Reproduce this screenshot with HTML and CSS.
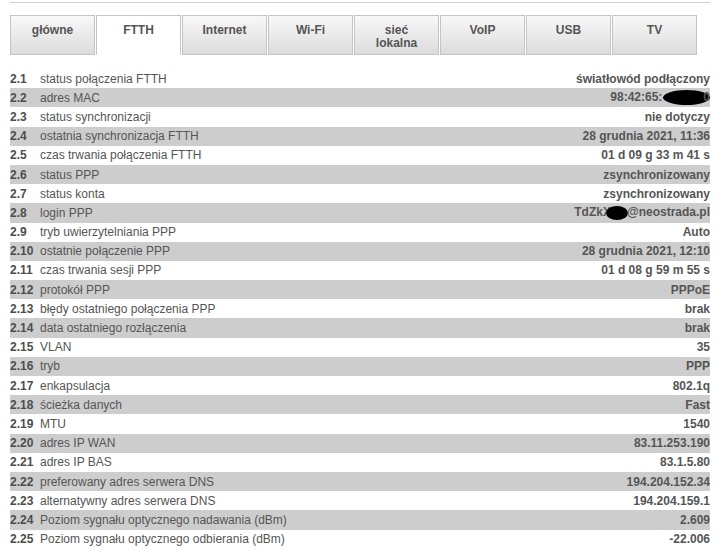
FILE: index.html
```html
<!DOCTYPE html>
<html lang="pl">
<head>
<meta charset="utf-8">
<title>FTTH</title>
<link rel="stylesheet" href="styles.css">
</head>
<body>
<div class="page">
  <div class="topline"></div>
  <nav class="tabs">
    <div class="tab">główne</div>
    <div class="tab active">FTTH</div>
    <div class="tab">Internet</div>
    <div class="tab">Wi-Fi</div>
    <div class="tab">sieć<br>lokalna</div>
    <div class="tab">VoIP</div>
    <div class="tab">USB</div>
    <div class="tab">TV</div>
  </nav>
  <div class="rows">
    <div class="row"><span class="num">2.1</span><span class="label">status połączenia FTTH</span><span class="val">światłowód podłączony</span></div>
    <div class="row alt"><span class="num">2.2</span><span class="label">adres MAC</span><span class="val">98:42:65:<span class="blob mac"></span>0</span></div>
    <div class="row"><span class="num">2.3</span><span class="label">status synchronizacji</span><span class="val">nie dotyczy</span></div>
    <div class="row alt"><span class="num">2.4</span><span class="label">ostatnia synchronizacja FTTH</span><span class="val">28 grudnia 2021, 11:36</span></div>
    <div class="row"><span class="num">2.5</span><span class="label">czas trwania połączenia FTTH</span><span class="val">01 d 09 g 33 m 41 s</span></div>
    <div class="row alt"><span class="num">2.6</span><span class="label">status PPP</span><span class="val">zsynchronizowany</span></div>
    <div class="row"><span class="num">2.7</span><span class="label">status konta</span><span class="val">zsynchronizowany</span></div>
    <div class="row alt"><span class="num">2.8</span><span class="label">login PPP</span><span class="val">TdZkX<span class="blob login"></span>@neostrada.pl</span></div>
    <div class="row"><span class="num">2.9</span><span class="label">tryb uwierzytelniania PPP</span><span class="val">Auto</span></div>
    <div class="row alt"><span class="num">2.10</span><span class="label">ostatnie połączenie PPP</span><span class="val">28 grudnia 2021, 12:10</span></div>
    <div class="row"><span class="num">2.11</span><span class="label">czas trwania sesji PPP</span><span class="val">01 d 08 g 59 m 55 s</span></div>
    <div class="row alt"><span class="num">2.12</span><span class="label">protokół PPP</span><span class="val">PPPoE</span></div>
    <div class="row"><span class="num">2.13</span><span class="label">błędy ostatniego połączenia PPP</span><span class="val">brak</span></div>
    <div class="row alt"><span class="num">2.14</span><span class="label">data ostatniego rozłączenia</span><span class="val">brak</span></div>
    <div class="row"><span class="num">2.15</span><span class="label">VLAN</span><span class="val">35</span></div>
    <div class="row alt"><span class="num">2.16</span><span class="label">tryb</span><span class="val">PPP</span></div>
    <div class="row"><span class="num">2.17</span><span class="label">enkapsulacja</span><span class="val">802.1q</span></div>
    <div class="row alt"><span class="num">2.18</span><span class="label">ścieżka danych</span><span class="val">Fast</span></div>
    <div class="row"><span class="num">2.19</span><span class="label">MTU</span><span class="val">1540</span></div>
    <div class="row alt"><span class="num">2.20</span><span class="label">adres IP WAN</span><span class="val">83.11.253.190</span></div>
    <div class="row"><span class="num">2.21</span><span class="label">adres IP BAS</span><span class="val">83.1.5.80</span></div>
    <div class="row alt"><span class="num">2.22</span><span class="label">preferowany adres serwera DNS</span><span class="val">194.204.152.34</span></div>
    <div class="row"><span class="num">2.23</span><span class="label">alternatywny adres serwera DNS</span><span class="val">194.204.159.1</span></div>
    <div class="row alt"><span class="num">2.24</span><span class="label">Poziom sygnału optycznego nadawania (dBm)</span><span class="val">2.609</span></div>
    <div class="row"><span class="num">2.25</span><span class="label">Poziom sygnału optycznego odbierania (dBm)</span><span class="val">-22.006</span></div>
  </div>
</div>
</body>
</html>
```
FILE: styles.css
```css
html, body {
  margin: 0;
  padding: 0;
  background: #ffffff;
}
body {
  font-family: "Liberation Sans", Arial, sans-serif;
  font-size: 12px;
  color: #555555;
}
.page {
  width: 700px;
  margin-left: 10px;
  padding-top: 2px;
}
.topline {
  height: 0;
  border-top: 1px solid #d0d0d0;
}
.tabs {
  display: flex;
  gap: 1px;
  margin-top: 12px;
  height: 40px;
}
.tab {
  box-sizing: border-box;
  width: 85px;
  height: 40px;
  border: 1px solid #c4c4c4;
  background: linear-gradient(#f8f8f8, #dcdcdc);
  font-weight: bold;
  font-size: 12px;
  line-height: 13px;
  color: #555555;
  text-align: center;
  padding-top: 8px;
}
.tab.active {
  background: #ffffff;
  border-bottom-color: #ffffff;
}
.rows {
  margin-top: 14px;
  display: flex;
  flex-direction: column;
}
.row {
  display: flex;
  align-items: center;
  height: 19.2px;
  line-height: 14px;
}
.row.alt {
  background: #cdcdcd;
}
.num {
  width: 30px;
  flex: none;
  font-weight: bold;
  color: #4d4d4d;
}
.label {
  flex: 1;
  color: #555555;
}
.val {
  font-weight: bold;
  color: #555555;
  text-align: right;
  white-space: nowrap;
}
.blob {
  display: inline-block;
  background: #000000;
  border-radius: 50%;
  vertical-align: middle;
}
.blob.mac {
  width: 47px;
  height: 15px;
  margin-left: 1px;
  margin-right: -7px;
}
.blob.login {
  width: 22px;
  height: 14px;
  margin-left: -5px;
  margin-right: -1px;
}
```
